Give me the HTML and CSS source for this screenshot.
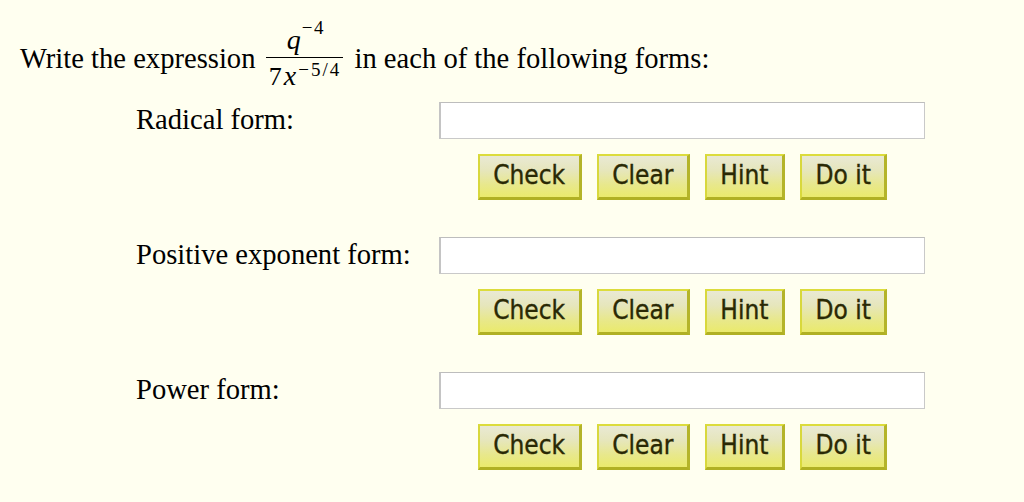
FILE: index.html
```html
<!DOCTYPE html>
<html>
<head>
<meta charset="utf-8">
<link rel="stylesheet" href="styles.css">
</head>
<body>
<div class="prompt"><span class="lead">Write the expression</span><span class="frac"><span class="num"><i class="var">q</i><span class="sup">−4</span></span><span class="den"><span class="digit">7</span><i class="var">x</i><span class="sup">−5/4</span></span></span><span class="trail">in each of the following forms:</span></div>
<div class="form">
  <div class="label">Radical form:</div>
  <input class="field" type="text">
  <div class="spacer"></div>
  <div class="buttons">
    <button class="btn">Check</button><button class="btn">Clear</button><button class="btn">Hint</button><button class="btn">Do it</button>
  </div>

  <div class="label">Positive exponent form:</div>
  <input class="field" type="text">
  <div class="spacer"></div>
  <div class="buttons">
    <button class="btn">Check</button><button class="btn">Clear</button><button class="btn">Hint</button><button class="btn">Do it</button>
  </div>

  <div class="label">Power form:</div>
  <input class="field" type="text">
  <div class="spacer"></div>
  <div class="buttons">
    <button class="btn">Check</button><button class="btn">Clear</button><button class="btn">Hint</button><button class="btn">Do it</button>
  </div>
</div>
</body>
</html>
```
FILE: styles.css
```css
html, body {
  margin: 0;
  padding: 0;
  background: #fffff0;
}
body {
  font-family: "Liberation Serif", "Times New Roman", serif;
  font-size: 28.6px;
  color: #000;
  width: 1024px;
  height: 502px;
  overflow: hidden;
}
.prompt {
  height: 102px;
  box-sizing: border-box;
  padding: 27px 0 0 20px;
  line-height: 28px;
  white-space: nowrap;
}
.lead, .trail {
  line-height: 28px;
}
.frac {
  display: inline-block;
  vertical-align: -17px;
  width: 77px;
  margin: 0 11px;
  text-align: center;
}
.num {
  display: block;
  height: 29.5px;
  line-height: 25px;
  border-bottom: 1.5px solid #000;
  font-size: 26px;
  padding-left: 2px;
  box-sizing: content-box;
}
.den {
  display: block;
  padding-top: 5px;
  line-height: 25px;
  font-size: 26px;
}
.var {
  font-style: italic;
  font-size: 28px;
  position: relative;
}
.num .var { top: 0; }
.digit { font-size: 26px; letter-spacing: 2px; }
.sup {
  font-size: 19px;
  position: relative;
}
.num .sup { top: -15px; margin-left: 1px; letter-spacing: 1.5px; }
.den .sup { top: -9px; margin-left: 2px; letter-spacing: 2px; }

.form {
  display: grid;
  grid-template-columns: 303px 486px;
  padding-left: 136px;
}
.label {
  height: 37px;
  display: flex;
  align-items: center;
  white-space: nowrap;
  line-height: 1;
}
.field {
  display: block;
  width: 486px;
  height: 37px;
  margin: 0;
  box-sizing: border-box;
  border: 1px solid #c9c9c9;
  border-left: 2px solid #c4c4c4;
  border-top-color: #bdbdbd;
  background: #fff;
  padding: 0 4px;
  font-size: 20px;
}
.buttons {
  display: flex;
  justify-content: center;
  gap: 15px;
  padding: 15px 0 37px 1px;
}
.btn {
  font-family: "DejaVu Sans Condensed", "DejaVu Sans", sans-serif;
  font-stretch: condensed;
  font-size: 26px;
  color: #2a2904;
  height: 46px;
  box-sizing: border-box;
  margin: 0;
  padding: 0 13.5px 3px 13.5px;
  line-height: 1;
  border-style: solid;
  border-width: 2px 3px 3px 2px;
  border-color: #dcdc3c #b4b42a #b0b024 #d8d83c;
  background: linear-gradient(to bottom, #e9e9d4 0%, #e6e6bc 35%, #e8e88c 70%, #eaea6c 100%);
  -webkit-text-stroke: 0.35px #2a2904;
  cursor: pointer;
}
```
